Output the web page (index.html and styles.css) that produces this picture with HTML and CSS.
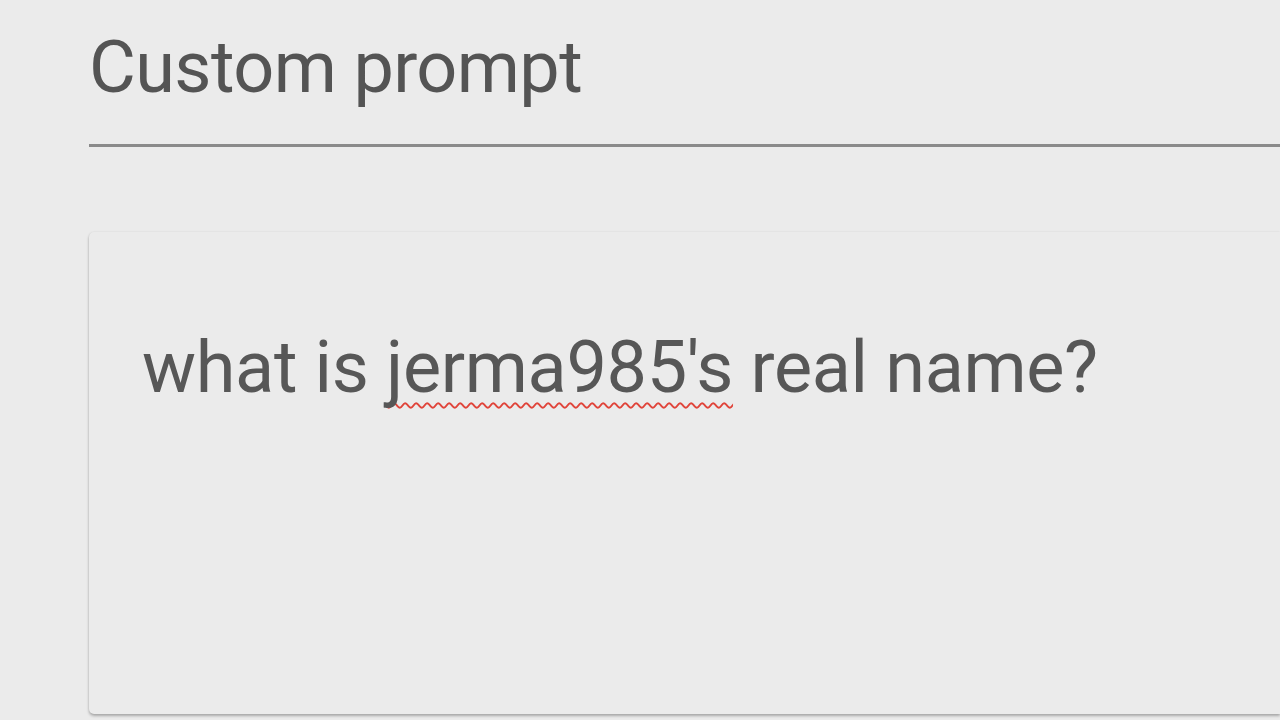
FILE: index.html
```html
<!DOCTYPE html>
<html>
<head>
<meta charset="utf-8">
<link rel="stylesheet" href="styles.css">
</head>
<body>
<div class="page">
  <div class="field">
    <div class="label">Custom prompt</div>
  </div>
  <div class="card">
    <p class="prompt">what is <span class="misspelled">jerma985's</span> real name?</p>
  </div>
</div>
</body>
</html>
```
FILE: styles.css
```css
html, body {
  margin: 0;
  padding: 0;
  background: #ebebeb;
  width: 1280px;
  height: 720px;
  overflow: hidden;
}
.page {
  padding-left: 89px;
  display: flex;
  flex-direction: column;
  font-family: Roboto, "Liberation Sans", sans-serif;
}
.field {
  border-bottom: 3px solid #8a8a8a;
  height: 147px;
  box-sizing: border-box;
}
.label {
  font-size: 72px;
  line-height: 1;
  color: #545454;
  padding-top: 32px;
  letter-spacing: -0.6px;
}
.card {
  margin-top: 85px;
  height: 482px;
  background: #ebebeb;
  border-radius: 5px 0 0 5px;
  box-shadow: 0 2px 3px rgba(0,0,0,0.28), 0 0 2px rgba(0,0,0,0.08);
}
.prompt {
  margin: 0;
  padding: 100px 0 0 53px;
  font-size: 72px;
  line-height: 1;
  color: #575757;
  letter-spacing: -0.35px;
}
.misspelled {
  text-decoration: underline wavy #e0443a;
  text-decoration-thickness: 2px;
  text-decoration-skip-ink: none;
  text-underline-offset: 10px;
}
```
